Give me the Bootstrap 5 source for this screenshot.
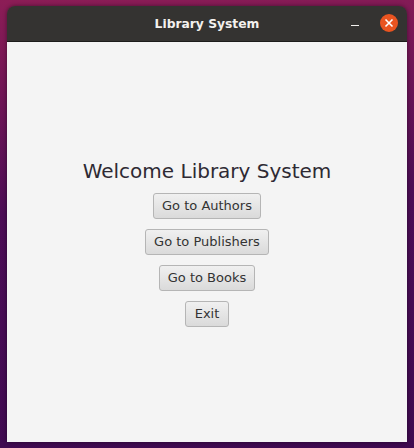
<!DOCTYPE html>
<html lang="en">
<head>
<meta charset="utf-8">
<title>Library System</title>
<link href="https://cdn.jsdelivr.net/npm/bootstrap@5.3.0/dist/css/bootstrap.min.css" rel="stylesheet">
<style>
html, body { height: 100%; }
body { margin: 0; overflow: hidden; font-family: "DejaVu Sans", sans-serif;
  background: linear-gradient(176deg, #8c1d56 0%, #6d1556 22%, #4c0d55 45%, #460c54 70%, #3f0a50 100%);
  padding: 6px 7px 6px 7px; }
.app-window { width: 400px; height: 436px; border-radius: 8px 8px 0 0; overflow: hidden; box-shadow: 0 0 4px rgba(0,0,0,.45); }
.title-strip { height: 36px; flex: none; background: #343331; border-bottom: 1px solid #1d1c1b; color: #f3f1ee; font-size: 12.3px; font-weight: 700; }
.title-text { line-height: 36px; }
.win-controls { right: 9px; top: 8px; gap: 21px; }
.win-min { width: 8px; height: 1px; background: #f3f1ee; margin-top: 5px; }
.win-close { width: 18px; height: 18px; background: #e95420; }
.app-body { background: #f4f4f4; gap: 10px; padding-top: 2px; }
.welcome { font-size: 20px; line-height: 24px; color: #2e2a33; margin: 0; font-weight: 400; }
.fx-btn { font-size: 13px; line-height: 16px; padding: 4px 8.25px; height: 26px; color: #333; background: linear-gradient(#f0f0f0, #dadada); border: 1px solid #b5b5b5; border-radius: 3px; }
</style>
</head>
<body>
<div class="app-window d-flex flex-column">
  <div class="title-strip position-relative text-center">
    <div class="title-text">Library System</div>
    <div class="win-controls position-absolute d-flex align-items-center">
      <div class="win-min"></div>
      <div class="win-close rounded-circle d-flex align-items-center justify-content-center">
        <svg width="10" height="10" viewBox="0 0 10 10"><path d="M1.5 1.5 8.5 8.5M8.5 1.5 1.5 8.5" stroke="#fff" stroke-width="1.6" fill="none"/></svg>
      </div>
    </div>
  </div>
  <div class="app-body flex-grow-1 d-flex flex-column align-items-center justify-content-center">
    <h1 class="welcome">Welcome Library System</h1>
    <button type="button" class="btn fx-btn">Go to Authors</button>
    <button type="button" class="btn fx-btn">Go to Publishers</button>
    <button type="button" class="btn fx-btn">Go to Books</button>
    <button type="button" class="btn fx-btn">Exit</button>
  </div>
</div>
<script src="https://cdn.jsdelivr.net/npm/bootstrap@5.3.0/dist/js/bootstrap.bundle.min.js"></script>
</body>
</html>
